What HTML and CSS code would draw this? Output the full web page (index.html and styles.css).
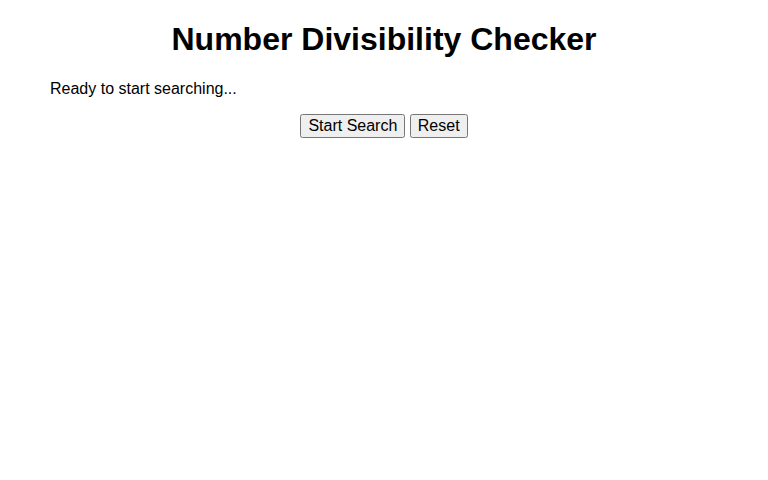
FILE: index.html
```html
<!DOCTYPE html>
<html>
<head>
<meta charset="utf-8">
<link rel="stylesheet" href="styles.css">
</head>
<body>
<h1 class="title">Number Divisibility Checker</h1>
<div class="status">Ready to start searching...</div>
<div class="controls">
<button class="btn">Start Search</button>
<button class="btn">Reset</button>
</div>
</body>
</html>
```
FILE: styles.css
```css
html, body {
  background: #fff;
}
body {
  margin: 0;
  padding: 21px 50px;
  font-family: "Liberation Sans", Arial, sans-serif;
  color: #000;
}
.title {
  margin: 0 0 22px;
  font-size: 32px;
  font-weight: bold;
  text-align: center;
}
.status {
  font-size: 16px;
  margin: 0 0 16px;
}
.controls {
  text-align: center;
}
.btn {
  font-family: "Liberation Sans", Arial, sans-serif;
  font-size: 16px;
}
```
